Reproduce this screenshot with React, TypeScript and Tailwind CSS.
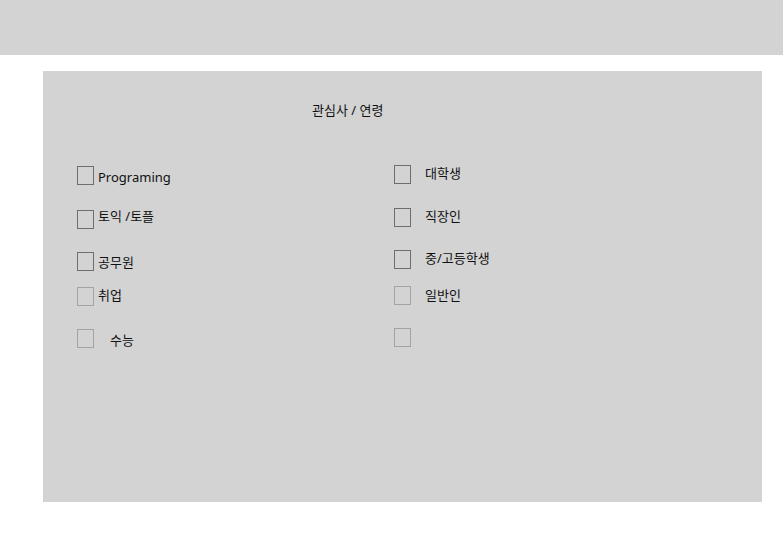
const font = { fontFamily: '"Noto Sans", "Noto Sans CJK KR", sans-serif' };

type Row = { label: string; gap: string; dark: boolean; textClass: string };

const left: Row[] = [
  { label: 'Programing', gap: 'mt-0', dark: true, textClass: 'ml-[4px] pt-[2px]' },
  { label: '토익 /토플', gap: 'mt-[25px]', dark: true, textClass: 'ml-[4px] -mt-[3px]' },
  { label: '공무원', gap: 'mt-[23px]', dark: true, textClass: 'ml-[4px] pt-[1px]' },
  { label: '취업', gap: 'mt-[16px]', dark: false, textClass: 'ml-[4px] -mt-[1px]' },
  { label: '수능', gap: 'mt-[23px]', dark: false, textClass: 'ml-[16px] pt-[2px]' },
];

const right: Row[] = [
  { label: '대학생', gap: 'mt-0', dark: true, textClass: 'ml-[14px] -mt-[1px]' },
  { label: '직장인', gap: 'mt-[24px]', dark: true, textClass: 'ml-[14px] -mt-[1px]' },
  { label: '중/고등학생', gap: 'mt-[23px]', dark: true, textClass: 'ml-[14px] -mt-[1px]' },
  { label: '일반인', gap: 'mt-[17px]', dark: false, textClass: 'ml-[14px] pt-0' },
  { label: '', gap: 'mt-[23px]', dark: false, textClass: 'ml-[14px]' },
];

function Check({ dark }: { dark: boolean }) {
  return (
    <div
      className={
        'w-[17px] h-[19px] shrink-0 border ' +
        (dark ? 'border-[#6e6e6e]' : 'border-[#a3a3a3]')
      }
    />
  );
}

function Column({ rows, className }: { rows: Row[]; className: string }) {
  return (
    <div className={'flex flex-col ' + className}>
      {rows.map((r, i) => (
        <div key={i} className={'flex items-start h-[19px] ' + r.gap}>
          <Check dark={r.dark} />
          {r.label && (
            <span className={'text-[13px] leading-[19px] text-[#111] whitespace-pre ' + r.textClass}>
              {r.label}
            </span>
          )}
        </div>
      ))}
    </div>
  );
}

export default function App() {
  return (
    <div className="w-[783px] h-[547px] bg-white" style={font}>
      <header className="h-[55px] bg-[#d3d3d3]" />
      <section className="mt-[16px] ml-[43px] w-[719px] h-[431px] bg-[#d3d3d3]">
        <h1 className="pt-[30px] ml-[269px] text-[13px] leading-[19px] text-[#111]">관심사 / 연령</h1>
        <div className="flex mt-[45px]">
          <Column rows={left} className="ml-[34px] mt-[1px] w-[317px]" />
          <Column rows={right} className="" />
        </div>
      </section>
    </div>
  );
}
